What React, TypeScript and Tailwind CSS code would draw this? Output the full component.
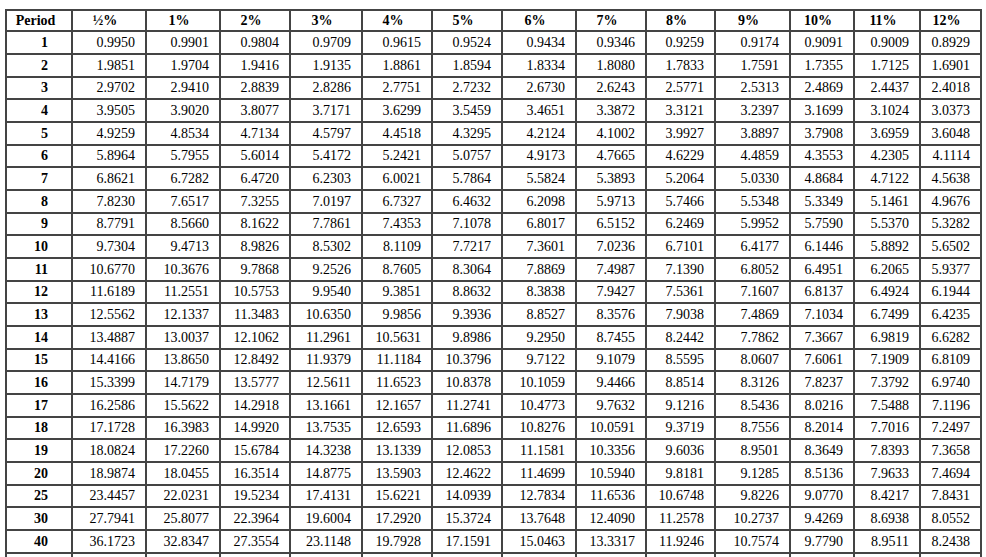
import React from 'react';

const headers = ['½%', '1%', '2%', '3%', '4%', '5%', '6%', '7%', '8%', '9%', '10%', '11%', '12%'];
const widths = [66, 74, 74, 70, 72, 70, 70, 74, 70, 69, 75, 64, 66, 61];

const rows: [string, string[]][] = [
  ['1', ['0.9950', '0.9901', '0.9804', '0.9709', '0.9615', '0.9524', '0.9434', '0.9346', '0.9259', '0.9174', '0.9091', '0.9009', '0.8929']],
  ['2', ['1.9851', '1.9704', '1.9416', '1.9135', '1.8861', '1.8594', '1.8334', '1.8080', '1.7833', '1.7591', '1.7355', '1.7125', '1.6901']],
  ['3', ['2.9702', '2.9410', '2.8839', '2.8286', '2.7751', '2.7232', '2.6730', '2.6243', '2.5771', '2.5313', '2.4869', '2.4437', '2.4018']],
  ['4', ['3.9505', '3.9020', '3.8077', '3.7171', '3.6299', '3.5459', '3.4651', '3.3872', '3.3121', '3.2397', '3.1699', '3.1024', '3.0373']],
  ['5', ['4.9259', '4.8534', '4.7134', '4.5797', '4.4518', '4.3295', '4.2124', '4.1002', '3.9927', '3.8897', '3.7908', '3.6959', '3.6048']],
  ['6', ['5.8964', '5.7955', '5.6014', '5.4172', '5.2421', '5.0757', '4.9173', '4.7665', '4.6229', '4.4859', '4.3553', '4.2305', '4.1114']],
  ['7', ['6.8621', '6.7282', '6.4720', '6.2303', '6.0021', '5.7864', '5.5824', '5.3893', '5.2064', '5.0330', '4.8684', '4.7122', '4.5638']],
  ['8', ['7.8230', '7.6517', '7.3255', '7.0197', '6.7327', '6.4632', '6.2098', '5.9713', '5.7466', '5.5348', '5.3349', '5.1461', '4.9676']],
  ['9', ['8.7791', '8.5660', '8.1622', '7.7861', '7.4353', '7.1078', '6.8017', '6.5152', '6.2469', '5.9952', '5.7590', '5.5370', '5.3282']],
  ['10', ['9.7304', '9.4713', '8.9826', '8.5302', '8.1109', '7.7217', '7.3601', '7.0236', '6.7101', '6.4177', '6.1446', '5.8892', '5.6502']],
  ['11', ['10.6770', '10.3676', '9.7868', '9.2526', '8.7605', '8.3064', '7.8869', '7.4987', '7.1390', '6.8052', '6.4951', '6.2065', '5.9377']],
  ['12', ['11.6189', '11.2551', '10.5753', '9.9540', '9.3851', '8.8632', '8.3838', '7.9427', '7.5361', '7.1607', '6.8137', '6.4924', '6.1944']],
  ['13', ['12.5562', '12.1337', '11.3483', '10.6350', '9.9856', '9.3936', '8.8527', '8.3576', '7.9038', '7.4869', '7.1034', '6.7499', '6.4235']],
  ['14', ['13.4887', '13.0037', '12.1062', '11.2961', '10.5631', '9.8986', '9.2950', '8.7455', '8.2442', '7.7862', '7.3667', '6.9819', '6.6282']],
  ['15', ['14.4166', '13.8650', '12.8492', '11.9379', '11.1184', '10.3796', '9.7122', '9.1079', '8.5595', '8.0607', '7.6061', '7.1909', '6.8109']],
  ['16', ['15.3399', '14.7179', '13.5777', '12.5611', '11.6523', '10.8378', '10.1059', '9.4466', '8.8514', '8.3126', '7.8237', '7.3792', '6.9740']],
  ['17', ['16.2586', '15.5622', '14.2918', '13.1661', '12.1657', '11.2741', '10.4773', '9.7632', '9.1216', '8.5436', '8.0216', '7.5488', '7.1196']],
  ['18', ['17.1728', '16.3983', '14.9920', '13.7535', '12.6593', '11.6896', '10.8276', '10.0591', '9.3719', '8.7556', '8.2014', '7.7016', '7.2497']],
  ['19', ['18.0824', '17.2260', '15.6784', '14.3238', '13.1339', '12.0853', '11.1581', '10.3356', '9.6036', '8.9501', '8.3649', '7.8393', '7.3658']],
  ['20', ['18.9874', '18.0455', '16.3514', '14.8775', '13.5903', '12.4622', '11.4699', '10.5940', '9.8181', '9.1285', '8.5136', '7.9633', '7.4694']],
  ['25', ['23.4457', '22.0231', '19.5234', '17.4131', '15.6221', '14.0939', '12.7834', '11.6536', '10.6748', '9.8226', '9.0770', '8.4217', '7.8431']],
  ['30', ['27.7941', '25.8077', '22.3964', '19.6004', '17.2920', '15.3724', '13.7648', '12.4090', '11.2578', '10.2737', '9.4269', '8.6938', '8.0552']],
  ['40', ['36.1723', '32.8347', '27.3554', '23.1148', '19.7928', '17.1591', '15.0463', '13.3317', '11.9246', '10.7574', '9.7790', '8.9511', '8.2438']],
];

export default function App() {
  return (
    <div className="bg-white h-[557px] overflow-hidden pl-[5px] pt-[9px] font-['Liberation_Serif','Times_New_Roman',serif] text-[14px] leading-[16px] text-black">
      <table className="table-fixed border-collapse w-[976px] border-2 border-[#444]">
        <colgroup>
          {widths.map((w, i) => (
            <col key={i} style={{ width: w }} />
          ))}
        </colgroup>
        <thead>
          <tr className="h-[21px]">
            <th className="border-2 border-[#444] text-center font-bold p-0 pr-[7px]">Period</th>
            {headers.map((h) => (
              <th key={h} className="border-2 border-[#444] text-center font-bold p-0 pr-[8px]">
                {h}
              </th>
            ))}
          </tr>
        </thead>
        <tbody>
          {rows.map(([period, vals], r) => (
            <tr key={period} className={r % 3 === 2 ? 'h-[22px]' : 'h-[23px]'}>
              <td className="border-2 border-[#444] text-right font-bold p-0 pr-[23px]">{period}</td>
              {vals.map((v, i) => (
                <td key={i} className="border-2 border-[#444] text-right p-0 pr-[10px]">
                  {v}
                </td>
              ))}
            </tr>
          ))}
          {/* next row continues below the visible area */}
          <tr className="h-[23px]">
            {widths.map((_, i) => (
              <td key={i} className="border-2 border-[#444] p-0" />
            ))}
          </tr>
        </tbody>
      </table>
    </div>
  );
}
